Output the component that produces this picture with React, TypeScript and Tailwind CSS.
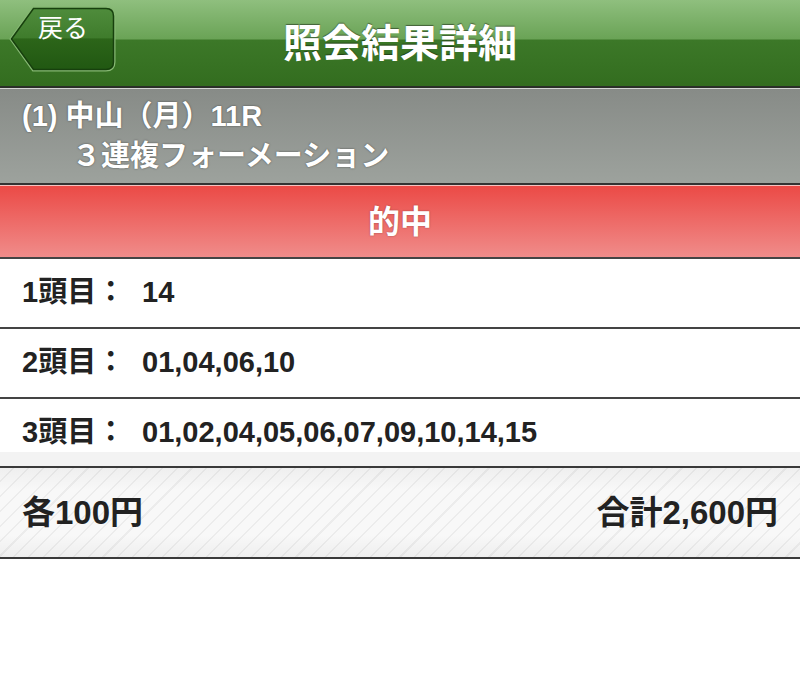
import React from 'react';

const font = "font-['Liberation_Sans','Noto_Sans_CJK_JP',sans-serif]";

function BackButton() {
    return (
        <div className="relative ml-[8px] mt-[5px] h-[68px] w-[109px]">
            <svg className="absolute inset-0" width="109" height="68" viewBox="0 0 109 68">
                <defs>
                    <linearGradient id="bb" x1="0" y1="0" x2="0" y2="1">
                        <stop offset="0" stopColor="#4f8c3c" />
                        <stop offset="0.48" stopColor="#3f7c2c" />
                        <stop offset="0.5" stopColor="#2c6519" />
                        <stop offset="1" stopColor="#215812" />
                    </linearGradient>
                </defs>
                <path
                    d="M2.5 34 L25 2.5 H98 Q106.5 2.5 106.5 11 V57 Q106.5 65.5 98 65.5 H25 Z"
                    fill="none"
                    stroke="#86b873"
                    strokeWidth="2"
                />
                <path
                    d="M3.5 34 L25.5 3.5 H98 Q105.5 3.5 105.5 11 V57 Q105.5 64.5 98 64.5 H25.5 Z"
                    fill="url(#bb)"
                    stroke="#17400d"
                    strokeWidth="1.5"
                />
            </svg>
            <span className={`relative block pl-[30px] pt-[8px] text-[25px] leading-[30px] text-white ${font}`}>戻る</span>
        </div>
    );
}

function Row({ label, value, clip }: { label: string; value: string; clip?: boolean }) {
    const inner = (
        <div className="flex h-[68px] items-center pl-[22px] text-[29px] font-bold text-[#222]">
            <span className="w-[120px]">{label}</span>
            <span>{value}</span>
        </div>
    );
    if (clip) {
        return <div className="h-[53px] overflow-hidden bg-white">{inner}</div>;
    }
    return <div className="h-[70px] border-b-2 border-[#444] bg-white">{inner}</div>;
}

export default function App() {
    return (
        <div className={`w-[800px] bg-white ${font}`}>
            <div className="grid h-[88px] grid-cols-[1fr_auto_1fr] items-center border-b-2 border-[#2a2f28] bg-[linear-gradient(to_bottom,#8fbf7e_0px,#6aa356_39px,#3c7828_40px,#336d1f_86px)]">
                <div className="flex items-start self-start">
                    <BackButton />
                </div>
                <h1 className="text-[39px] font-bold leading-none text-white [text-shadow:0_-1px_1px_rgba(0,0,0,0.45)]">照会結果詳細</h1>
                <div />
            </div>

            <div className="flex h-[97px] flex-col justify-center border-t border-[#d4d6d4] border-b-2 border-b-[#333] bg-[linear-gradient(to_bottom,#878b87,#9da29d)] pl-[22px] text-white [text-shadow:0_0_2px_rgba(0,0,0,0.55)]">
                <div className="text-[29px] font-bold leading-[40px]">(1) 中山（月）11R</div>
                <div className="pl-[50px] text-[29px] font-bold leading-[40px]">３連複フォーメーション</div>
            </div>

            <div className="flex h-[74px] items-center justify-center border-t border-[#f6c2c0] border-b-2 border-b-[#444] bg-[linear-gradient(to_bottom,#eb4a46,#f08c8a)] text-[32px] font-bold text-white [text-shadow:0_0_2px_rgba(0,0,0,0.35)]">
                的中
            </div>

            <Row label="1頭目：" value="14" />
            <Row label="2頭目：" value="01,04,06,10" />
            <Row label="3頭目：" value="01,02,04,05,06,07,09,10,14,15" clip />

            <div className="h-[16px] border-b-2 border-[#3a3a3a] bg-[#f3f3f3]" />

            <div className="flex h-[91px] items-center justify-between border-b-2 border-[#3a3a3a] bg-[#f7f7f7] bg-[image:linear-gradient(to_bottom,rgba(0,0,0,0.04),rgba(0,0,0,0)_25%,rgba(0,0,0,0)_75%,rgba(0,0,0,0.04)),repeating-linear-gradient(135deg,#f8f8f8_0px,#f8f8f8_9px,#ececec_9px,#ececec_10.5px)] px-[22px] text-[33px] font-bold text-[#222]">
                <span>各100円</span>
                <span>合計2,600円</span>
            </div>
        </div>
    );
}
